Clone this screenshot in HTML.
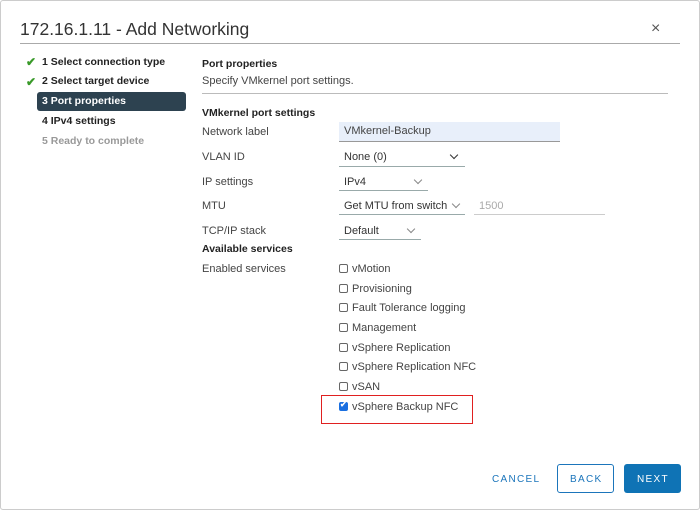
<html><head><style>
body{margin:0;width:700px;height:510px;background:#fff;font-family:"Liberation Sans",sans-serif;position:relative;overflow:hidden;color:#333}
.a{position:absolute;white-space:nowrap}
.f{font-size:11px;color:#444}
.b{font-weight:bold;font-size:10.5px;color:#222}
.cb{position:absolute;width:7px;height:7px;border:1px solid #666;border-radius:2px;background:#fff}
.ul{position:absolute;height:1px;background:#9aa}
.car{position:absolute;width:5px;height:5px;border-right:1px solid #888;border-bottom:1px solid #888;transform:rotate(45deg)}
</style></head><body>
<div style="position:absolute;left:0;top:0;width:698px;height:508px;border:1px solid #ccc;border-radius:3px"></div>
<div class="a" style="left:20px;top:19px;font-size:17.5px;color:#333">172.16.1.11 - Add Networking</div>
<div class="a" style="left:651px;top:20px;font-size:16px;color:#555">×</div>
<div class="ul" style="left:20px;top:43px;width:660px;background:#aaa"></div>

<div class="a" style="left:26px;top:55px;color:#3a9a2a;font-size:12px;font-weight:bold">✔</div>
<div class="a b" style="left:42px;top:56px">1 Select connection type</div>
<div class="a" style="left:26px;top:75px;color:#3a9a2a;font-size:12px;font-weight:bold">✔</div>
<div class="a b" style="left:42px;top:75px">2 Select target device</div>
<div style="position:absolute;left:37px;top:92px;width:149px;height:19px;background:#2d4250;border-radius:3px"></div>
<div class="a b" style="left:42px;top:95px;color:#fff">3 Port properties</div>
<div class="a b" style="left:42px;top:115px">4 IPv4 settings</div>
<div class="a b" style="left:42px;top:135px;color:#999">5 Ready to complete</div>

<div class="a b" style="left:202px;top:58px">Port properties</div>
<div class="a f" style="left:202px;top:75px">Specify VMkernel port settings.</div>
<div class="ul" style="left:202px;top:93px;width:466px;background:#bbb"></div>
<div class="a b" style="left:202px;top:107px">VMkernel port settings</div>
<div class="a f" style="left:202px;top:126px">Network label</div>
<div style="position:absolute;left:339px;top:122px;width:221px;height:19px;background:#e8effa;border-bottom:1px solid #999"></div>
<div class="a f" style="left:344px;top:125px">VMkernel-Backup</div>
<div class="a f" style="left:202px;top:151px">VLAN ID</div>
<div class="a f" style="left:344px;top:151px;color:#333">None (0)</div>
<div class="car" style="left:451px;top:152px;border-color:#333;border-width:0 1.5px 1.5px 0"></div>
<div class="ul" style="left:339px;top:166px;width:126px"></div>
<div class="a f" style="left:202px;top:176px">IP settings</div>
<div class="a f" style="left:344px;top:176px;color:#333">IPv4</div>
<div class="car" style="left:415px;top:177px"></div>
<div class="ul" style="left:339px;top:190px;width:89px"></div>
<div class="a f" style="left:202px;top:200px">MTU</div>
<div class="a f" style="left:344px;top:200px;color:#333">Get MTU from switch</div>
<div class="car" style="left:453px;top:201px"></div>
<div class="ul" style="left:339px;top:214px;width:126px"></div>
<div class="a f" style="left:479px;top:200px;color:#aaa">1500</div>
<div class="ul" style="left:474px;top:214px;width:131px;background:#ccc"></div>
<div class="a f" style="left:202px;top:225px">TCP/IP stack</div>
<div class="a f" style="left:344px;top:225px;color:#333">Default</div>
<div class="car" style="left:408px;top:226px"></div>
<div class="ul" style="left:339px;top:239px;width:82px"></div>
<div class="a b" style="left:202px;top:243px">Available services</div>
<div class="a f" style="left:202px;top:263px">Enabled services</div>

<div class="cb" style="left:339px;top:264px"></div><div class="a f" style="left:352px;top:263px">vMotion</div>
<div class="cb" style="left:339px;top:284px"></div><div class="a f" style="left:352px;top:283px">Provisioning</div>
<div class="cb" style="left:339px;top:303px"></div><div class="a f" style="left:352px;top:302px">Fault Tolerance logging</div>
<div class="cb" style="left:339px;top:323px"></div><div class="a f" style="left:352px;top:322px">Management</div>
<div class="cb" style="left:339px;top:343px"></div><div class="a f" style="left:352px;top:342px">vSphere Replication</div>
<div class="cb" style="left:339px;top:362px"></div><div class="a f" style="left:352px;top:361px">vSphere Replication NFC</div>
<div class="cb" style="left:339px;top:382px"></div><div class="a f" style="left:352px;top:381px">vSAN</div>
<div class="cb" style="left:339px;top:402px;background:#1a6fe0;border-color:#1a6fe0"></div>
<div class="a" style="left:340px;top:400px;color:#fff;font-size:8px;font-weight:bold">✔</div>
<div class="a f" style="left:352px;top:401px">vSphere Backup NFC</div>
<div style="position:absolute;left:321px;top:395px;width:150px;height:27px;border:1px solid #e02020"></div>

<div class="a" style="left:492px;top:474px;font-size:10px;letter-spacing:1.3px;color:#1b75bb">CANCEL</div>
<div style="position:absolute;left:557px;top:464px;width:55px;height:27px;border:1px solid #1b75bb;border-radius:3px"></div>
<div class="a" style="left:570px;top:474px;font-size:10px;letter-spacing:1.3px;color:#1b75bb">BACK</div>
<div style="position:absolute;left:624px;top:464px;width:57px;height:29px;background:#0f73b5;border-radius:3px"></div>
<div class="a" style="left:637px;top:474px;font-size:10px;letter-spacing:1.3px;color:#fff">NEXT</div>
</body></html>
